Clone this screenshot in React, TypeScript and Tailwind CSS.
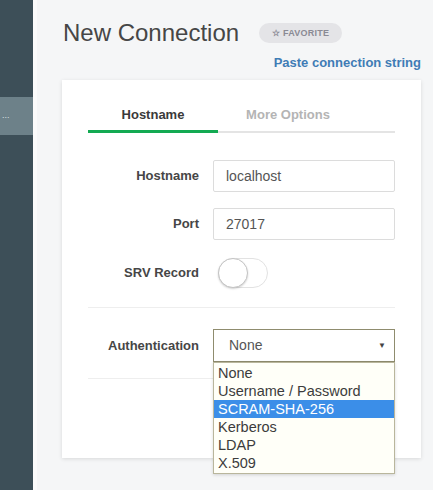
import React from 'react';

const font = { fontFamily: '"Liberation Sans", Arial, sans-serif' };

const authOptions = ['None', 'Username / Password', 'SCRAM-SHA-256', 'Kerberos', 'LDAP', 'X.509'];

const FormRow: React.FC<{ label: string; children: React.ReactNode }> = ({ label, children }) => (
  <div className="flex items-center">
    <div className="w-[111px] text-right text-[13px] font-bold text-[#464646]">{label}</div>
    <div className="ml-[14px] flex-1">{children}</div>
  </div>
);

const App: React.FC = () => {
  return (
    <div className="flex h-[490px] w-[433px] overflow-hidden bg-[#f5f6f7]" style={font}>
      {/* sidebar */}
      <div className="w-[37px] shrink-0 border-r-4 border-[#fbfbfb] bg-[#3d4f58] pt-[97px]">
        <div className="flex h-[38px] items-center bg-[#6d8189] pl-[2px] text-[9px] text-[#d9e0e3]">...</div>
      </div>

      {/* main */}
      <div className="flex-1 pl-[25px] pr-[12px]">
        <div className="mt-[18px] flex h-[30px] items-center">
          <h1 className="pl-px text-[24px] font-normal leading-[30px] text-[#464646]">New Connection</h1>
          <span className="ml-[20px] rounded-full bg-[#e4e4e7] px-[13px] py-[5px] text-[9px] font-bold leading-[10px] tracking-wide text-[#8a8a94]">
            ☆ FAVORITE
          </span>
        </div>
        <div className="mt-[7px] text-right text-[13px] font-bold leading-[15px] text-[#3f7cb5]">
          Paste connection string
        </div>

        <div className="mt-[10px] h-[378px] bg-white px-[26px] shadow-[0_1px_4px_rgba(0,0,0,0.12)]">
          {/* tabs */}
          <div className="flex pt-[27px]">
            <div className="w-[130px] border-b-[3px] border-[#13aa52] pb-[8px] text-center text-[13px] font-bold leading-[15px] text-[#3a3a3a]">
              Hostname
            </div>
            <div className="flex-1 border-b-2 border-[#e4e4e4] pb-[9px]">
              <div className="w-[140px] text-center text-[13px] font-bold leading-[15px] text-[#b4b4b4]">More Options</div>
            </div>
          </div>

          <div className="mt-[27px] flex flex-col gap-[16px]">
            <FormRow label="Hostname">
              <div className="flex h-[32px] items-center rounded-[2px] border border-[#dcdcdc] px-[12px] text-[14px] text-[#555]">
                localhost
              </div>
            </FormRow>
            <FormRow label="Port">
              <div className="flex h-[32px] items-center rounded-[2px] border border-[#dcdcdc] px-[12px] text-[14px] text-[#555]">
                27017
              </div>
            </FormRow>
            <div className="pt-[2px]">
              <FormRow label="SRV Record">
                <div className="relative ml-[5px] h-[30px] w-[50px] rounded-full border border-[#e2e2e2] bg-white">
                  <div className="absolute -left-px -top-px h-[30px] w-[30px] rounded-full border border-[#c4c4c4] bg-white shadow-[0_1px_2px_rgba(0,0,0,0.18)]" />
                </div>
              </FormRow>
            </div>
          </div>

          <div className="mt-[19px] border-t border-[#eeeeee]" />

          <div className="mt-[21px]">
            <FormRow label="Authentication">
              <div className="relative">
                <div className="flex h-[33px] items-center justify-between border border-[#8f8c6e] bg-white pl-[15px] pr-[8px] text-[14px] text-[#555]">
                  <span>None</span>
                  <span className="text-[8px] text-[#444]">▼</span>
                </div>
                {/* open dropdown list */}
                <div className="absolute left-0 right-0 top-[33px] z-10 border border-[#b9b69c] bg-[#fffff8] py-[1px] text-[14.5px] leading-[18px] text-[#3c3c3c] shadow-[0_1px_3px_rgba(0,0,0,0.15)]">
                  {authOptions.map((opt) => (
                    <div
                      key={opt}
                      className={
                        opt === 'SCRAM-SHA-256'
                          ? 'bg-[#3b8ee8] pl-[4px] text-white'
                          : 'pl-[4px]'
                      }
                    >
                      {opt}
                    </div>
                  ))}
                </div>
              </div>
            </FormRow>
          </div>

          <div className="mt-[16px] border-t border-[#eeeeee]" />
        </div>
      </div>
    </div>
  );
};

export default App;
